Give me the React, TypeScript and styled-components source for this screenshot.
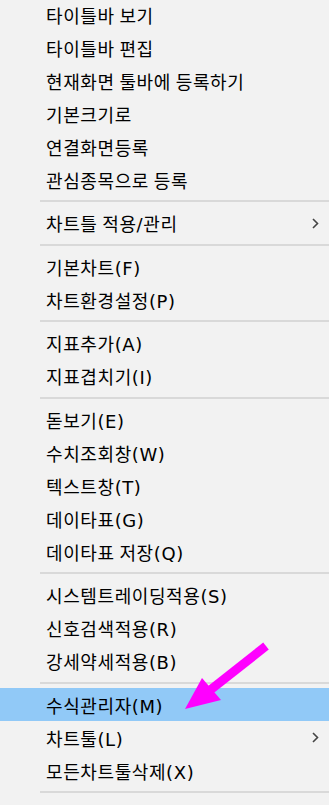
import React from "react";
import styled, { createGlobalStyle } from "styled-components";

type Entry =
  | { kind: "item"; label: string; sub?: boolean; active?: boolean }
  | { kind: "sep" };

const entries: Entry[] = [
  { kind: "item", label: "타이틀바 보기" },
  { kind: "item", label: "타이틀바 편집" },
  { kind: "item", label: "현재화면 툴바에 등록하기" },
  { kind: "item", label: "기본크기로" },
  { kind: "item", label: "연결화면등록" },
  { kind: "item", label: "관심종목으로 등록" },
  { kind: "sep" },
  { kind: "item", label: "차트틀 적용/관리", sub: true },
  { kind: "sep" },
  { kind: "item", label: "기본차트(F)" },
  { kind: "item", label: "차트환경설정(P)" },
  { kind: "sep" },
  { kind: "item", label: "지표추가(A)" },
  { kind: "item", label: "지표겹치기(I)" },
  { kind: "sep" },
  { kind: "item", label: "돋보기(E)" },
  { kind: "item", label: "수치조회창(W)" },
  { kind: "item", label: "텍스트창(T)" },
  { kind: "item", label: "데이타표(G)" },
  { kind: "item", label: "데이타표 저장(Q)" },
  { kind: "sep" },
  { kind: "item", label: "시스템트레이딩적용(S)" },
  { kind: "item", label: "신호검색적용(R)" },
  { kind: "item", label: "강세약세적용(B)" },
  { kind: "sep" },
  { kind: "item", label: "수식관리자(M)", active: true },
  { kind: "item", label: "차트툴(L)", sub: true },
  { kind: "item", label: "모든차트툴삭제(X)" },
  { kind: "sep" },
];

const App = () => {
  return (
    <>
      <GlobalStyle />
      <Screen>
        <Menu>
          {entries.map((e, i) =>
            e.kind === "sep" ? (
              <Separator key={i} />
            ) : (
              <Item key={i} $active={e.active}>
                <span>{e.label}</span>
                {e.sub && (
                  <Chevron viewBox="0 0 7 11">
                    <path d="M1 1 L5.5 5.5 L1 10" />
                  </Chevron>
                )}
              </Item>
            )
          )}
        </Menu>
        <Pointer viewBox="0 0 329 805">
          <line x1="266" y1="646" x2="209" y2="691" />
          <polygon points="185,709 202,678 221,700" />
        </Pointer>
      </Screen>
    </>
  );
};

export default App;

const GlobalStyle = createGlobalStyle`
  html, body {
    margin: 0;
    padding: 0;
    background: #f2f2f2;
    overflow: hidden;
  }
`;

const Screen = styled.div`
  position: relative;
  width: 329px;
  height: 805px;
  overflow: hidden;
  background: #f2f2f2;
  font-family: "DejaVu Sans", "Noto Sans CJK KR", sans-serif;
  color: #000;
`;

const Menu = styled.div`
  display: flex;
  flex-direction: column;
  margin-top: -2px;
`;

const Item = styled.div<{ $active?: boolean }>`
  display: flex;
  align-items: center;
  justify-content: space-between;
  height: 33px;
  padding: 0 10px 0 46px;
  font-size: 18px;
  letter-spacing: 0.6px;
  word-spacing: -1.5px;
  background: ${(p) => (p.$active ? "#91c9f7" : "transparent")};
  white-space: nowrap;
`;

const Separator = styled.div`
  height: 10.5px;
  margin-left: 40px;
  display: flex;
  align-items: center;

  &::after {
    content: "";
    flex: 1;
    height: 2px;
    background: #d9d9d9;
  }
`;

const Chevron = styled.svg`
  width: 7px;
  height: 11px;
  fill: none;
  stroke: #444;
  stroke-width: 1.6;
`;

const Pointer = styled.svg`
  position: absolute;
  inset: 0;
  width: 329px;
  height: 805px;
  pointer-events: none;

  line {
    stroke: #ff00ff;
    stroke-width: 9;
  }
  polygon {
    fill: #ff00ff;
  }
`;
